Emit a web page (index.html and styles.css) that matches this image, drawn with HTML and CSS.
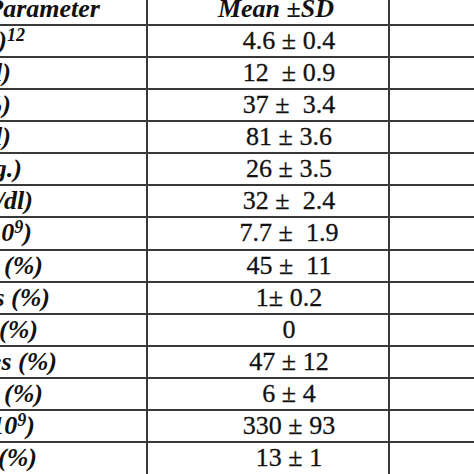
FILE: index.html
```html
<!DOCTYPE html>
<html>
<head>
<meta charset="utf-8">
<link rel="stylesheet" href="styles.css">
</head>
<body>
<div class="table">
  <div class="cell lab head r46">Parameter</div>
  <div class="cell val head">Mean ±SD</div>
  <div class="cell blank"></div>

  <div class="cell lab r121"><span>RBC (x10)<sup>12</sup></span></div>
  <div class="cell val">4.6 ± 0.4</div>
  <div class="cell blank"></div>

  <div class="cell lab r135">Hb (g/dl)</div>
  <div class="cell val">12&nbsp; ± 0.9</div>
  <div class="cell blank"></div>

  <div class="cell lab r135">HCT (%)</div>
  <div class="cell val">37 ±&nbsp; 3.4</div>
  <div class="cell blank"></div>

  <div class="cell lab r135">MCV (fl)</div>
  <div class="cell val">81 ± 3.6</div>
  <div class="cell blank"></div>

  <div class="cell lab r124">MCH (pg.)</div>
  <div class="cell val">26 ± 3.5</div>
  <div class="cell blank"></div>

  <div class="cell lab r113">MCHC (g/dl)</div>
  <div class="cell val">32 ±&nbsp; 2.4</div>
  <div class="cell blank"></div>

  <div class="cell lab r114"><span>WBC (x10<sup>9</sup>)</span></div>
  <div class="cell val">7.7 ±&nbsp; 1.9</div>
  <div class="cell blank"></div>

  <div class="cell lab r103">Neutrophils (%)</div>
  <div class="cell val">45 ±&nbsp; 11</div>
  <div class="cell blank"></div>

  <div class="cell lab r96">Eosinophils (%)</div>
  <div class="cell val">1± 0.2</div>
  <div class="cell blank"></div>

  <div class="cell lab r108">Basophils(%)</div>
  <div class="cell val">0</div>
  <div class="cell blank"></div>

  <div class="cell lab r89">Lymphocytes (%)</div>
  <div class="cell val">47 ± 12</div>
  <div class="cell blank"></div>

  <div class="cell lab r103">Monocytes (%)</div>
  <div class="cell val">6 ± 4</div>
  <div class="cell blank"></div>

  <div class="cell lab r111"><span>Platelets (x10<sup>9</sup>)</span></div>
  <div class="cell val">330 ± 93</div>
  <div class="cell blank"></div>

  <div class="cell lab r109">Reticulocytes(%)</div>
  <div class="cell val">13 ± 1</div>
  <div class="cell blank"></div>
</div>
</body>
</html>
```

FILE: styles.css
```css
html, body {
  margin: 0;
  padding: 0;
  background: #ffffff;
  overflow: hidden;
}

.table {
  margin-top: -6.5px;
  display: grid;
  grid-template-columns: 148px 242px 1fr;
  grid-auto-rows: 32.15px;
  font-family: "Liberation Serif", "Times New Roman", serif;
  font-size: 26px;
  color: #111111;
}

.cell {
  box-sizing: border-box;
  border-bottom: 2px solid #383838;
  line-height: 30px;
  white-space: nowrap;
}

.lab {
  display: flex;
  justify-content: flex-end;
  border-right: 2px solid #383838;
  font-weight: bold;
  font-style: italic;
}

.val {
  text-align: center;
  padding-left: 42px;
  border-right: 2px solid #383838;
  -webkit-text-stroke: 0.3px #111111;
}

.val.head {
  padding-left: 16px;
  font-weight: bold;
  font-style: italic;
  -webkit-text-stroke: 0;
}

sup {
  font-size: 18px;
  line-height: 1;
  vertical-align: 8px;
}

.r46 { padding-right: 46px; }
.r89 { padding-right: 89px; }
.r96 { padding-right: 96px; }
.r103 { padding-right: 103px; }
.r108 { padding-right: 108px; }
.r109 { padding-right: 109px; }
.r111 { padding-right: 111px; }
.r113 { padding-right: 113px; }
.r114 { padding-right: 114px; }
.r121 { padding-right: 121px; }
.r124 { padding-right: 124px; }
.r135 { padding-right: 135px; }
```
